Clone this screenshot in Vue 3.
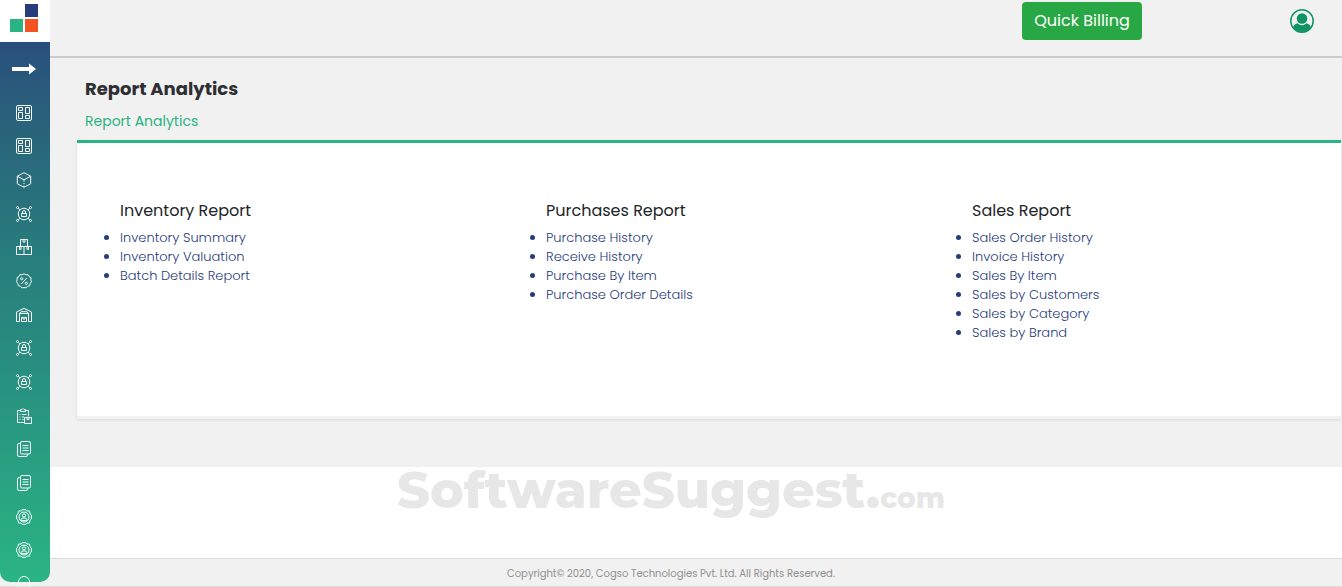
<script setup>
const dashboard =
  'M2 .5H14Q15.5 .5 15.5 2V14Q15.5 15.5 14 15.5H2Q.5 15.5 .5 14V2Q.5 .5 2 .5ZM2.5 2.5H6.5V5.5H2.5ZM2.5 7.5H6.5V13.5H2.5ZM9.5 2.5H13.5V8.5H9.5ZM9.5 10.5H13.5V13.5H9.5Z'
const cube = 'M8 .7L14.7 4.2V11.8L8 15.3L1.3 11.8V4.2ZM1.3 4.2L8 7.8L14.7 4.2M8 7.8V9.5M8 11V12M8 13.5V15'
const access =
  'M8 2.2A5.8 5.8 0 1 1 8 13.8A5.8 5.8 0 1 1 8 2.2ZM5.5 7.5H10.5V10.5H5.5ZM6.5 7.5V6A1.5 1.5 0 0 1 9.5 6V7.5M1.5 .5A1 1 0 1 1 1.5 2.5A1 1 0 1 1 1.5 .5ZM14.5 .5A1 1 0 1 1 14.5 2.5A1 1 0 1 1 14.5 .5ZM1.5 13.5A1 1 0 1 1 1.5 15.5A1 1 0 1 1 1.5 13.5ZM14.5 13.5A1 1 0 1 1 14.5 15.5A1 1 0 1 1 14.5 13.5ZM2.3 2.3L4 4M13.7 2.3L12 4M2.3 13.7L4 12M13.7 13.7L12 12'
const boxes =
  'M4.5 .5H11.5V7.5H4.5ZM.5 7.5H15.5V15.5H.5ZM8 7.5V15.5M7 .5V3H9V.5M3.5 7.5V10.5H5V7.5M11 7.5V10.5H12.5V7.5'
const discount =
  'M8 .7L9.9 1.8L12.1 1.7L13.1 3.6L15 4.7L14.9 6.9L15.5 8.8L14.2 10.5L13.7 12.7L11.6 13.3L10 14.9L8 14.5L6 14.9L4.4 13.3L2.3 12.7L1.8 10.5L.5 8.8L1.1 6.9L1 4.7L2.9 3.6L3.9 1.7L6.1 1.8ZM10.8 5L5.2 11M5.7 4.6A1.1 1.1 0 1 1 5.7 6.8A1.1 1.1 0 1 1 5.7 4.6ZM10.3 9.2A1.1 1.1 0 1 1 10.3 11.4A1.1 1.1 0 1 1 10.3 9.2Z'
const warehouse =
  'M.5 14.5V5L8 1.3L15.5 5V14.5H12.5V6.5H3.5V14.5ZM3.5 6.5L5 4.7H11L12.5 6.5M5.5 14.5V10.5H10.5V14.5ZM7 10.5V12H9V10.5'
const clipboard =
  'M8 14.5H1.5V2.5H4.5V1.5H6L7 .5L8 1.5H9.5V3.5H4.5V2.5M9.5 2.5H12.5V8.5M3.5 6.5H4.5M6 6.5H10.5M3.5 9H4.5M6 9H8M3.5 11.5H4.5M6 11.5H7.5M8.5 9.5H15.5V15.5H8.5ZM11 9.5V11.5H13V9.5'
const documents =
  'M6 .5H13Q14.5 .5 14.5 2V11.5Q14.5 13 13 13H6Q4.5 13 4.5 11.5V2Q4.5 .5 6 .5ZM4.5 2.5H3Q1.5 2.5 1.5 4V14Q1.5 15.5 3 15.5H10Q11.5 15.5 11.5 14V13M6.5 4.5H12.5M6.5 7H12.5M6.5 9.5H12.5'
const settings =
  'M6 .7H10L11 2H13.5L14 4.7L15.4 6V10L14 11.3L13.5 14H11L10 15.3H6L5 14H2.5L2 11.3L.6 10V6L2 4.7L2.5 2H5ZM8 3A5 5 0 1 1 8 13A5 5 0 1 1 8 3ZM8 4.8A1.6 1.6 0 1 1 8 8A1.6 1.6 0 1 1 8 4.8ZM5.2 11.5V10.5Q5.2 8.8 8 8.8Q10.8 8.8 10.8 10.5V11.5Z'
const bell = 'M2.5 13V6A5.5 5.5 0 0 1 13.5 6V13M1 13.5H15'

const menu = [
  { label: 'Dashboard', path: dashboard },
  { label: 'Overview', path: dashboard },
  { label: 'Items', path: cube },
  { label: 'Vendors', path: access },
  { label: 'Stock', path: boxes },
  { label: 'Discounts', path: discount },
  { label: 'Warehouse', path: warehouse },
  { label: 'Customers', path: access },
  { label: 'Users', path: access },
  { label: 'Orders', path: clipboard },
  { label: 'Invoices', path: documents },
  { label: 'Reports', path: documents },
  { label: 'Account settings', path: settings },
  { label: 'System settings', path: settings },
  { label: 'Notifications', path: bell }
]

const reports = [
  {
    title: 'Inventory Report',
    links: ['Inventory Summary', 'Inventory Valuation', 'Batch Details Report']
  },
  {
    title: 'Purchases Report',
    links: ['Purchase History', 'Receive History', 'Purchase By Item', 'Purchase Order Details']
  },
  {
    title: 'Sales Report',
    links: [
      'Sales Order History',
      'Invoice History',
      'Sales By Item',
      'Sales by Customers',
      'Sales by Category',
      'Sales by Brand'
    ]
  }
]
</script>

<template>
  <div class="page">
    <aside class="sidebar">
      <a class="logo" href="#" aria-label="Home">
        <svg width="28" height="28" viewBox="0 0 28 28">
          <rect x="15" y="0" width="13" height="13" fill="#273c7b" />
          <rect x="0" y="15" width="13" height="13" fill="#2ab484" />
          <rect x="15" y="15" width="13" height="13" fill="#f45323" />
        </svg>
      </a>
      <nav class="rail" aria-label="Main">
        <button class="expand" type="button" aria-label="Expand menu">
          <svg width="24" height="12" viewBox="0 0 24 12">
            <path d="M0 4H17V.5L24 6L17 11.5V8H0Z" fill="#fff" />
          </svg>
        </button>
        <ul class="menu">
          <li v-for="item in menu" :key="item.label">
            <a href="#" :aria-label="item.label">
              <svg width="16" height="16" viewBox="0 0 16 16">
                <path :d="item.path" />
              </svg>
            </a>
          </li>
        </ul>
      </nav>
    </aside>

    <header class="topbar">
      <button class="billing" type="button">Quick Billing</button>
      <button class="profile" type="button" aria-label="Profile">
        <svg width="24" height="24" viewBox="0 0 24 24">
          <circle cx="12" cy="12" r="11.2" fill="none" stroke="#0f9564" stroke-width="1.5" />
          <circle cx="12" cy="9.5" r="5.3" fill="#0f9564" />
          <path d="M3 18.5Q3.8 15.2 7.5 14.2Q12 18.2 16.5 14.2Q20.2 15.2 21 18.5A11.3 11.3 0 0 1 3 18.5Z" fill="#0f9564" />
        </svg>
      </button>
    </header>

    <main class="content">
      <h1>Report Analytics</h1>
      <a class="crumb" href="#">Report Analytics</a>
      <div class="card">
        <section v-for="group in reports" :key="group.title">
          <h2>{{ group.title }}</h2>
          <ul>
            <li v-for="link in group.links" :key="link">
              <a href="#">{{ link }}</a>
            </li>
          </ul>
        </section>
      </div>
    </main>

    <div class="brand">SoftwareSuggest<span>.</span><small>com</small></div>

    <footer class="footer">Copyright© 2020, Cogso Technologies Pvt. Ltd. All Rights Reserved.</footer>
  </div>
</template>

<style>
body {
  margin: 0;
}
</style>

<style scoped>
* {
  box-sizing: border-box;
}
.page {
  display: flex;
  flex-direction: column;
  min-height: 100vh;
  background: #fff;
  color: #2f2f33;
  font-family: Poppins, Inter, "Open Sans", sans-serif;
}
a {
  color: inherit;
  text-decoration: none;
}
button {
  border: 0;
  padding: 0;
  background: none;
  font: inherit;
  cursor: pointer;
}
svg {
  display: block;
}
ul {
  margin: 0;
  padding: 0;
}
.sidebar {
  position: fixed;
  top: 0;
  bottom: 5px;
  left: 0;
  width: 50px;
  display: flex;
  flex-direction: column;
}
.logo {
  flex: none;
  height: 42px;
  padding: 4px 10px;
  background: #fff;
}
.rail {
  flex: 1;
  min-height: 0;
  border-radius: 0 0 10px 10px;
  background: linear-gradient(#294f7c, #29637b 16%, #287d7d 40%, #289080 62%, #2ab484);
}
.expand {
  display: flex;
  align-items: center;
  padding: 0 12px;
  height: 54px;
}
.menu {
  display: grid;
  grid-template-rows: repeat(15, 1fr);
  height: 505px;
  list-style: none;
}
.menu a {
  display: flex;
  align-items: center;
  height: 100%;
  padding-left: 16px;
}
.menu path {
  fill: none;
  stroke: #f4fbf9;
  stroke-width: 1;
  stroke-linejoin: round;
}
.topbar {
  display: flex;
  justify-content: flex-end;
  align-items: flex-start;
  height: 58px;
  padding: 2px 28px 0 50px;
  border-bottom: 2px solid #ccc;
  background: #f1f1f1;
}
.billing {
  width: 120px;
  height: 38px;
  margin-right: 148px;
  padding-bottom: 2px;
  border-radius: 4px;
  background: #28a745;
  color: #fff;
  font-size: 16px;
}
.profile {
  padding-top: 7px;
}
.content {
  padding: 19px 1px 48px 77px;
  background: #f1f1f1;
}
h1 {
  margin: 0 8px 10px;
  font-size: 18px;
  line-height: 24px;
  font-weight: 700;
}
.crumb {
  display: block;
  margin: 0 8px 9px;
  color: #2ab484;
  font-size: 14px;
  line-height: 20px;
}
.card {
  display: grid;
  grid-template-columns: repeat(3, 1fr);
  gap: 60px;
  min-height: 279px;
  padding: 56px 3px 72px 43px;
  border-top: 3px solid #2ab484;
  border-bottom: 3px solid #f1f1f1;
  background: #fff;
  box-shadow: 0 1px 3px rgba(0, 0, 0, 0.1);
}
h2 {
  margin: 0 0 5px;
  color: #212529;
  font-size: 16px;
  line-height: 24px;
  font-weight: 400;
}
.card li {
  color: #273c7b;
  font-size: 13px;
  line-height: 19px;
  font-weight: 300;
}
.brand {
  flex: 1;
  min-height: 91px;
  color: #e7e7e7;
  text-align: center;
  font-family: Montserrat, Poppins, Inter, sans-serif;
  font-size: 51px;
  line-height: 46px;
  font-weight: 800;
}
.brand small {
  font-size: 28px;
}
.footer {
  height: 29px;
  border: solid #dcdcdc;
  border-width: 1px 0;
  background: #f1f1f1;
  color: #909090;
  text-align: center;
  font-size: 10px;
  line-height: 29px;
}
</style>
